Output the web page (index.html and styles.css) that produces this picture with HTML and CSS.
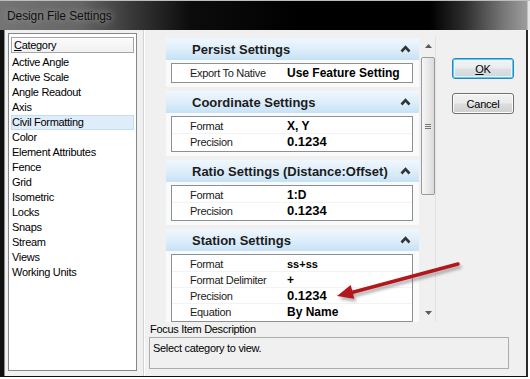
FILE: index.html
```html
<!DOCTYPE html>
<html lang="en">
<head>
    <meta charset="UTF-8">
    <title>Design File Settings</title>
    <link rel="stylesheet" href="styles.css">
</head>
<body>
    <div class="window">
        <div class="titlebar"><span class="title">Design File Settings</span></div>
        <div class="client">
            <div class="cats">
                <div class="cat-head"><u>C</u>ategory</div>
                <ul class="cat-list">
                    <li>Active Angle</li>
                    <li>Active Scale</li>
                    <li>Angle Readout</li>
                    <li>Axis</li>
                    <li class="selected">Civil Formatting</li>
                    <li>Color</li>
                    <li>Element Attributes</li>
                    <li>Fence</li>
                    <li>Grid</li>
                    <li>Isometric</li>
                    <li>Locks</li>
                    <li>Snaps</li>
                    <li>Stream</li>
                    <li>Views</li>
                    <li>Working Units</li>
                </ul>
            </div>
            <div class="divider"></div>
            <div class="main">
                <div class="top">
                    <div class="pane">
                        <div class="sections">
                            <div class="section">
                                <div class="sec-head">Persist Settings<svg class="chev" width="11" height="8" viewBox="0 0 11 8"><path d="M1.5 6.5 L5.5 2.2 L9.5 6.5"/></svg></div>
                                <div class="sec-body">
                                    <div class="row"><span class="label">Export To Native</span><span class="value">Use Feature Setting</span></div>
                                </div>
                            </div>
                            <div class="section">
                                <div class="sec-head">Coordinate Settings<svg class="chev" width="11" height="8" viewBox="0 0 11 8"><path d="M1.5 6.5 L5.5 2.2 L9.5 6.5"/></svg></div>
                                <div class="sec-body">
                                    <div class="row"><span class="label">Format</span><span class="value">X, Y</span></div>
                                    <div class="row"><span class="label">Precision</span><span class="value num">0.1234</span></div>
                                </div>
                            </div>
                            <div class="section">
                                <div class="sec-head">Ratio Settings (Distance:Offset)<svg class="chev" width="11" height="8" viewBox="0 0 11 8"><path d="M1.5 6.5 L5.5 2.2 L9.5 6.5"/></svg></div>
                                <div class="sec-body">
                                    <div class="row"><span class="label">Format</span><span class="value">1:D</span></div>
                                    <div class="row"><span class="label">Precision</span><span class="value num">0.1234</span></div>
                                </div>
                            </div>
                            <div class="section">
                                <div class="sec-head">Station Settings<svg class="chev" width="11" height="8" viewBox="0 0 11 8"><path d="M1.5 6.5 L5.5 2.2 L9.5 6.5"/></svg></div>
                                <div class="sec-body">
                                    <div class="row"><span class="label">Format</span><span class="value small">ss+ss</span></div>
                                    <div class="row"><span class="label">Format Delimiter</span><span class="value">+</span></div>
                                    <div class="row"><span class="label">Precision</span><span class="value num">0.1234</span></div>
                                    <div class="row"><span class="label">Equation</span><span class="value">By Name</span></div>
                                </div>
                            </div>
                        </div>
                        <div class="scrollbar">
                            <svg class="arrow-up" width="7" height="4" viewBox="0 0 7 4"><path d="M0 4 L3.5 0 L7 4 Z"/></svg>
                            <div class="thumb"><span class="grip"></span></div>
                            <svg class="arrow-down" width="7" height="4" viewBox="0 0 7 4"><path d="M0 0 L3.5 4 L7 0 Z"/></svg>
                        </div>
                    </div>
                    <div class="actions">
                        <button class="btn default"><u>O</u>K</button>
                        <button class="btn">Cancel</button>
                    </div>
                </div>
                <div class="focus-label">Focus Item Description</div>
                <div class="focus-box">Select category to view.</div>
            </div>
        </div>
        <svg class="callout" width="530" height="379" viewBox="0 0 530 379">
            <defs>
                <filter id="soft" x="-20%" y="-20%" width="140%" height="140%">
                    <feGaussianBlur stdDeviation="1.5"/>
                </filter>
            </defs>
            <g fill="#555" stroke="#555" opacity="0.45" filter="url(#soft)" transform="translate(2 3)">
                <line x1="458" y1="264" x2="350" y2="293" stroke-width="3.5" stroke-linecap="round"/>
                <polygon points="337,296 350.7,285.1 354.3,298.7" stroke="none"/>
            </g>
            <line x1="458" y1="264" x2="350" y2="293" stroke="#b3161b" stroke-width="3.5" stroke-linecap="round"/>
            <polygon points="337,296 350.7,285.1 354.3,298.7" fill="#b3161b"/>
        </svg>
    </div>
</body>
</html>
```

FILE: styles.css
```css
* {
    margin: 0;
    padding: 0;
    box-sizing: border-box;
}

body {
    background: #fff;
    font-family: "Liberation Sans", Arial, sans-serif;
    font-size: 11px;
    letter-spacing: -0.3px;
    color: #000;
}

.window {
    position: relative;
    width: 530px;
    height: 379px;
}

.titlebar {
    height: 30px;
    padding-left: 7px;
    background: linear-gradient(to right, #747474 0, #666 80px, #3a3a3a 130px, #0c0c0c 190px, #000 300px, #000 430px, #2e2e2e 465px, #7a7a7a 505px, #9c9c9c 527px, #e6e6e6 528px);
    border-top: 1px solid #bdbdbd;
}

.title {
    display: inline-block;
    font-size: 12px;
    letter-spacing: -0.1px;
    line-height: 30px;
    color: #111;
    text-shadow: 0 0 6px #9a9a9a, 0 0 10px #8a8a8a;
}

.client {
    display: flex;
    width: 528px;
    height: 347px;
    background: #f0f0f0;
    border-left: 4px solid #101010;
    border-right: 2px solid #2a2a2a;
    border-bottom: 1px solid #111;
    box-shadow: inset 1px 0 #8c8c8c;
}

/* category list */
.cats {
    width: 129px;
    height: 338px;
    margin: 3px 0 0 4px;
    padding: 3px 2px 0;
    background: #fff;
    border: 1px solid #828790;
}

.cat-head {
    height: 16px;
    line-height: 15px;
    padding-left: 2px;
    background: linear-gradient(#fbfbfb, #f1f1f1);
    border: 1px solid #a5a5a5;
    box-shadow: inset 1px 1px #fff;
}

.cat-head u {
    text-decoration-thickness: 1px;
}

.cat-list {
    list-style: none;
    padding-top: 2px;
}

.cat-list li {
    height: 15px;
    line-height: 15px;
    padding-left: 1px;
}

.cat-list li.selected {
    background: #dfedfb;
    box-shadow: inset 0 0 0 1px #c4ddf4;
}

.divider {
    width: 2px;
    margin-left: 6px;
    border-left: 1px solid #d2d2d2;
    border-right: 1px solid #fff;
}

.main {
    padding: 6px 0 0 4px;
}

.top {
    display: flex;
    height: 286px;
}

.pane {
    display: flex;
    width: 287px;
    height: 286px;
    overflow: hidden;
}

/* property sections */
.sections {
    width: 270px;
    padding: 2px 0 0 17px;
}

.section {
    margin-bottom: 4px;
    background: #f8fafc;
    padding-bottom: 4px;
}

.sec-head {
    display: flex;
    justify-content: space-between;
    align-items: center;
    height: 22px;
    padding: 0 8px 0 26px;
    background: linear-gradient(#f0f7fd, #dcedfa 55%, #c6e2f6);
    font-size: 13px;
    font-weight: bold;
    letter-spacing: 0;
    color: #1c1c1c;
}

.chev {
    fill: none;
    stroke: #333;
    stroke-width: 2.6;
}

.sec-body {
    margin: 3px 6px 0 5px;
    padding: 1px 0;
    background: #fff;
    border: 1px solid #8e8f8f;
}

.row {
    display: flex;
    height: 16px;
    line-height: 16px;
    border-bottom: 1px solid #f3f3f3;
}

.row:last-child {
    border-bottom: none;
}

.label {
    width: 115px;
    padding-left: 18px;
    color: #1a1a1a;
}

.value {
    font-size: 12px;
    font-weight: bold;
    letter-spacing: 0;
}

.value.num {
    font-size: 13px;
}

.value.small {
    font-size: 11px;
}

/* scroll bar */
.scrollbar {
    position: relative;
    width: 15px;
    margin-left: 2px;
    display: flex;
    flex-direction: column;
    align-items: center;
    border-right: 1px solid #e2e2e2;
}

.scrollbar svg {
    fill: #5a5a5a;
}

.arrow-up {
    margin-top: 8px;
}

.thumb {
    display: flex;
    justify-content: center;
    align-items: center;
    width: 14px;
    height: 138px;
    margin-top: 9px;
    background: linear-gradient(to right, #f6f6f6, #e9e9e9 50%, #dadada);
    border: 1px solid #9a9a9a;
    border-radius: 2px;
}

.grip {
    width: 6px;
    height: 5px;
    border-top: 1px solid #777;
    border-bottom: 1px solid #777;
    background: linear-gradient(#777, #777) center / 6px 1px no-repeat;
}

.arrow-down {
    margin-top: auto;
    margin-bottom: 7px;
}

/* buttons */
.actions {
    display: flex;
    flex-direction: column;
    gap: 14px;
    margin: 22px 0 0 16px;
}

.btn {
    width: 62px;
    height: 21px;
    font-family: "Liberation Sans", Arial, sans-serif;
    font-size: 11px;
    letter-spacing: -0.2px;
    color: #000;
    border: 1px solid #707070;
    border-radius: 3px;
    background: linear-gradient(#f2f2f2 0, #ebebeb 48%, #dddddd 52%, #cfcfcf 100%);
    box-shadow: inset 0 0 0 1px #fcfcfc;
}

.btn.default {
    border-color: #3c7fb1;
    box-shadow: inset 0 0 0 1px #48d4fa, inset 0 0 0 2px #e9f6fd;
    background: linear-gradient(#f2f4f6 0, #eaeced 48%, #dde1e3 52%, #d1d6d8 100%);
}

.focus-label {
    height: 15px;
    line-height: 14px;
    padding-left: 1px;
}

.focus-box {
    width: 360px;
    height: 32px;
    padding: 3px 3px;
    line-height: 15px;
    border: 1px solid #adadad;
    background: #f0f0f0;
}

.callout {
    position: absolute;
    left: 0;
    top: 0;
    pointer-events: none;
}
```
